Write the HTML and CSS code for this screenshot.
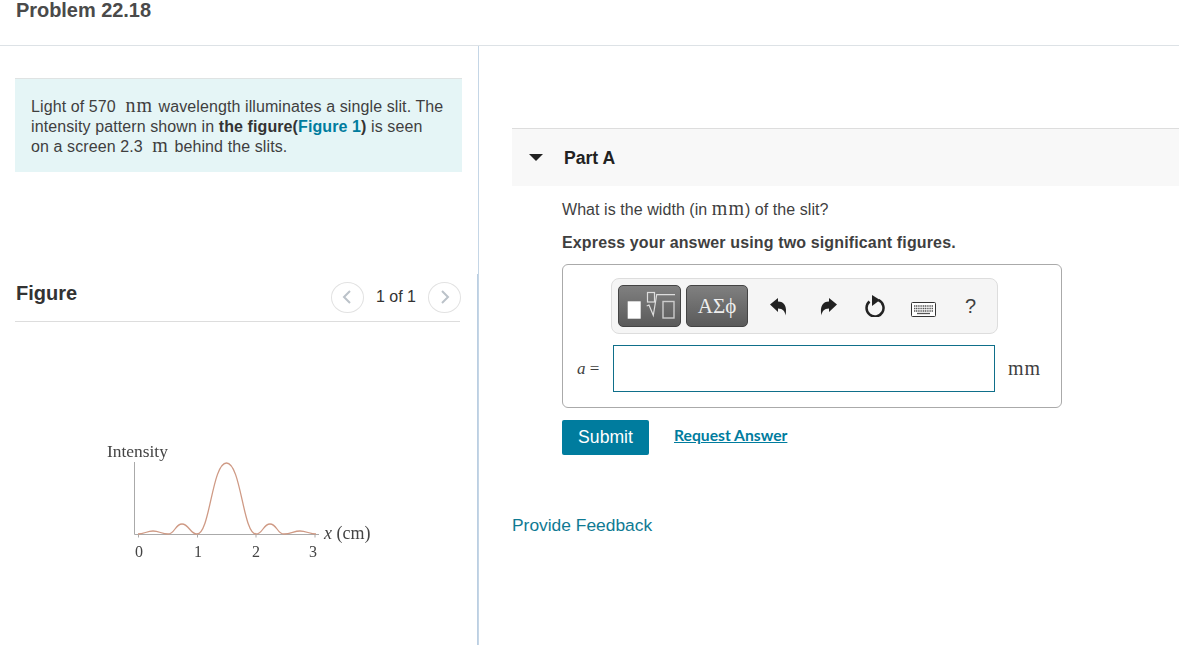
FILE: index.html
```html
<!DOCTYPE html>
<html lang="en">
  <head>
    <meta charset="UTF-8" />
    <title>Problem 22.18</title>
    <link rel="stylesheet" href="styles.css">
  </head>
  <body>
    <header class="page-header">
      <h1>Problem 22.18</h1>
    </header>
    <div class="columns">
      <section class="left-col">
        <div class="intro">
          <div>Light of 570 <span class="unit">nm</span> wavelength illuminates a single slit. The</div>
          <div>intensity pattern shown in <b>the figure(<a href="#">Figure 1</a>)</b> is seen</div>
          <div>on a screen 2.3 <span class="unit">m</span> behind the slits.</div>
        </div>
        <div class="figure-head">
          <h2>Figure</h2>
          <div class="pager">
            <span class="pager-btn">
              <svg width="10" height="16" viewBox="0 0 10 16"><path d="M8 2 L2 8 L8 14" /></svg>
            </span>
            <span class="pager-text">1 of 1</span>
            <span class="pager-btn">
              <svg width="10" height="16" viewBox="0 0 10 16"><path d="M2 2 L8 8 L2 14" /></svg>
            </span>
          </div>
        </div>
        <!-- graph coordinates start at x=90, y=435 of the page -->
        <svg class="graph" width="300" height="130" viewBox="90 435 300 130">
          <path class="axis" d="M134.5 462 V534.5 H319" />
          <path class="axis" d="M138.5 534.5 v3 M197.5 534.5 v3 M256 534.5 v3 M315 534.5 v3" />
          <path class="curve" d="M138 534 C144 534 147 531 153 531 C159 531 162 534 168 534 C175 534 175 524 182 524 C189 524 190 534 197 534 C210 534 212 463 226.5 463 C241 463 243 534 256 534 C263 534 263 524 270 524 C277 524 277 534 284 534 C291 534 294 531 300 531 C306 531 310 534 316 534" />
          <text class="label" x="107" y="457">Intensity</text>
          <text class="label label-x" x="324" y="539"><tspan font-style="italic">x</tspan> (cm)</text>
          <text class="tick" x="139" y="557">0</text>
          <text class="tick" x="198" y="557">1</text>
          <text class="tick" x="256" y="557">2</text>
          <text class="tick" x="313" y="557">3</text>
        </svg>
      </section>
      <section class="right-col">
        <div class="part-head">
          <span class="caret"></span>
          <h3>Part A</h3>
        </div>
        <div class="part-body">
          <p class="question">What is the width (in <span class="unit">mm</span>) of the slit?</p>
          <p class="instruction">Express your answer using two significant figures.</p>
          <div class="answer-box">
            <div class="toolbar">
              <button class="tool-btn tool-wide">
                <svg width="61" height="40" viewBox="0 0 61 40">
                  <rect x="8.700" y="15.300" width="13" height="17.400" fill="#fff" />
                  <rect x="28.500" y="6.500" width="7" height="9.500" fill="none" stroke="#ddd" stroke-width="1.200" />
                  <path d="M27.700 20 L30 19 L34.300 29.300 L37.700 8.700 H56" fill="none" stroke="#ddd" stroke-width="1.200" />
                  <rect x="44" y="15.500" width="11" height="16.500" fill="none" stroke="#ccc" stroke-width="1.400" />
                </svg>
              </button>
              <button class="tool-btn tool-greek">&Alpha;&Sigma;&#981;</button>
              <svg class="tool-undo" width="18" height="18" viewBox="0 0 18 18"><path d="M0 6.500 L8 0 V3.500 C14 3.500 17.500 8 15.500 17.500 C15 13.500 13 10.500 8 10.500 V14 Z" /></svg>
              <svg class="tool-redo" width="18" height="18" viewBox="0 0 18 18"><path d="M18 6.500 L10 0 V3.500 C4 3.500 0.500 8 2.500 17.500 C3 13.500 5 10.500 10 10.500 V14 Z" /></svg>
              <svg class="tool-reset" width="22" height="22" viewBox="0 0 22 22">
                <path class="ring" d="M5.500 6.500 A8.500 8.500 0 1 0 14.500 5.200" />
                <path class="head" d="M8 0 L16 5 L8 11 Z" />
              </svg>
              <svg class="tool-kbd" width="25" height="15" viewBox="0 0 25 15">
                <rect x="0.500" y="0.500" width="24" height="14" rx="1" fill="#fff" stroke="#333" />
                <path d="M3 4 H22 M3 6.500 H22 M3 9 H22" stroke="#555" stroke-width="1.300" stroke-dasharray="1.200 .6" />
                <path d="M6 11.500 H19" stroke="#555" stroke-width="1.300" />
              </svg>
              <span class="tool-help">?</span>
            </div>
            <div class="answer-row">
              <span class="var"><i>a</i> =</span>
              <input class="answer-input" type="text">
              <span class="answer-unit">mm</span>
            </div>
          </div>
          <div class="actions">
            <button class="submit-btn">Submit</button>
            <a class="request-link" href="#">Request Answer</a>
          </div>
        </div>
        <a class="feedback" href="#">Provide Feedback</a>
      </section>
    </div>
  </body>
</html>
```

FILE: styles.css
```css
body {
  margin: 0;
  height: 645px;
  overflow: hidden;
  font-family: "Liberation Sans", Arial, sans-serif;
  font-size: 16px;
  color: #3f3f3f;
  background: white;
}
a {
  color: #007c9e;
  text-decoration: none;
}
.page-header {
  height: 45px;
  border-bottom: 1px solid #dde2e6;
  padding-left: 16px;
}
.page-header h1 {
  margin: 0;
  font-size: 20px;
  line-height: 20px;
  color: #4a4a4a;
  letter-spacing: -0.05px;
}
.columns {
  display: flex;
  height: 599px;
}
.left-col {
  position: relative;
  width: 463px;
  flex-shrink: 0;
  border-right: 1px solid #c5d6e6;
  padding-left: 15px;
}
/* the divider gets one pixel wider next to the figure */
.left-col::after {
  content: "";
  position: absolute;
  top: 228px;
  bottom: 0;
  right: 0;
  width: 1px;
  background: #bccfe2;
}
.intro {
  width: 447px;
  box-sizing: border-box;
  margin-top: 32px;
  padding: 18px 16px 15px;
  line-height: 20px;
  background: #e5f5f6;
  border-top: 1px solid #dfe3e3;
  white-space: nowrap;
  letter-spacing: 0.1px;
}
.intro b {
  color: #333;
}
.intro a {
  font-weight: bold;
}
.unit {
  font-family: "Liberation Serif", serif;
  font-size: 20px;
  line-height: 16px;
  letter-spacing: 1px;
  margin: 0 1px 0 5px;
}
.question .unit {
  margin: 0;
}
.figure-head {
  width: 445px;
  height: 50px;
  margin-top: 100px;
  display: flex;
  justify-content: space-between;
  align-items: center;
  border-bottom: 1px solid #ddd;
  box-sizing: border-box;
}
.figure-head h2 {
  margin: 0 0 7px 1px;
  font-size: 20px;
  color: #333;
}
.pager {
  display: flex;
  align-items: center;
  gap: 12px;
  margin-top: 1px;
  margin-right: -1px;
}
.pager-btn {
  width: 31px;
  height: 29px;
  border: 1px solid #e2e2e2;
  border-radius: 50%;
  display: flex;
  align-items: center;
  justify-content: center;
}
.pager-btn path {
  fill: none;
  stroke: #bbc2c9;
  stroke-width: 2;
}
.pager-text {
  color: #333;
}
.graph {
  display: block;
  margin: 113px 0 0 75px;
  filter: blur(0.4px);
}
.axis {
  fill: none;
  stroke: #aaa;
  stroke-width: 1;
}
.curve {
  fill: none;
  stroke: #cf9a85;
  stroke-width: 1.300;
}
.label, .tick {
  font-family: "Liberation Serif", serif;
  fill: #444;
}
.label {
  font-size: 17.400px;
}
.label-x {
  font-size: 18px;
}
.tick {
  font-size: 16px;
  text-anchor: middle;
}
.right-col {
  flex: 1;
  padding-left: 33px;
  padding-top: 82px;
}
.part-head {
  height: 57px;
  display: flex;
  align-items: center;
  background: #f8f8f8;
  border-top: 1px solid #ddd;
}
.caret {
  margin-left: 17px;
  width: 0;
  height: 0;
  border-left: 7px solid transparent;
  border-right: 7px solid transparent;
  border-top: 7px solid #222;
}
.part-head h3 {
  margin: 2px 0 0 21px;
  font-size: 17.600px;
  color: #222;
}
.part-body {
  padding-left: 50px;
}
.question {
  margin: 14px 0 0;
  line-height: 20px;
  letter-spacing: 0.06px;
}
.instruction {
  margin: 13px 0 0;
  font-weight: bold;
  line-height: 20px;
  letter-spacing: 0.14px;
}
.answer-box {
  width: 500px;
  height: 144px;
  box-sizing: border-box;
  margin-top: 11px;
  padding-top: 13px;
  border: 1px solid #aaa;
  border-radius: 6px;
}
.toolbar {
  width: 387px;
  height: 56px;
  box-sizing: border-box;
  margin-left: 48px;
  padding-left: 6px;
  display: flex;
  align-items: center;
  background: #f5f5f5;
  border: 1px solid #ddd;
  border-radius: 8px;
}
.tool-btn {
  height: 42px;
  padding: 0;
  display: flex;
  align-items: center;
  justify-content: center;
  border: 1px solid #444;
  border-radius: 5px;
  background: linear-gradient(#808080, #5a5a5a);
  color: #eee;
}
.tool-wide {
  width: 63px;
}
.tool-greek {
  width: 62px;
  margin-left: 5px;
  font-family: "Liberation Serif", serif;
  font-size: 21px;
}
.tool-undo path, .tool-redo path, .tool-reset .head {
  fill: #222;
}
.tool-undo {
  margin-left: 22px;
  margin-top: 2px;
}
.tool-redo {
  margin-left: 31px;
  margin-top: 2px;
}
.tool-reset {
  margin-left: 27px;
}
.tool-reset .ring {
  fill: none;
  stroke: #222;
  stroke-width: 2.500;
}
.tool-kbd {
  margin-left: 25px;
  margin-top: 6px;
}
.tool-help {
  margin-left: 29px;
  font-size: 20px;
}
.answer-row {
  display: flex;
  align-items: center;
  margin-top: 11px;
}
.var {
  width: 50px;
  box-sizing: border-box;
  padding-left: 14px;
  font-family: "Liberation Serif", serif;
  font-size: 17px;
}
.answer-input {
  width: 382px;
  height: 47px;
  box-sizing: border-box;
  border: 1px solid #0f6f8a;
  padding: 0;
  background: white;
}
.answer-unit {
  margin-left: 13px;
  font-family: "Liberation Serif", serif;
  font-size: 20px;
  letter-spacing: 1px;
}
.actions {
  display: flex;
  align-items: center;
  margin-top: 12px;
}
.submit-btn {
  width: 87px;
  height: 35px;
  border: none;
  border-radius: 2px;
  background: #007c9e;
  color: white;
  font-family: "Liberation Sans", Arial, sans-serif;
  font-size: 17.600px;
  padding: 0;
}
.request-link {
  margin-left: 25px;
  margin-top: -6px;
  font-family: Lato, "Liberation Sans", sans-serif;
  font-size: 15.700px;
  font-weight: bold;
  text-decoration: underline;
}
.feedback {
  display: block;
  margin-top: 60px;
  font-size: 17.400px;
  color: #0f7a93;
}
```
